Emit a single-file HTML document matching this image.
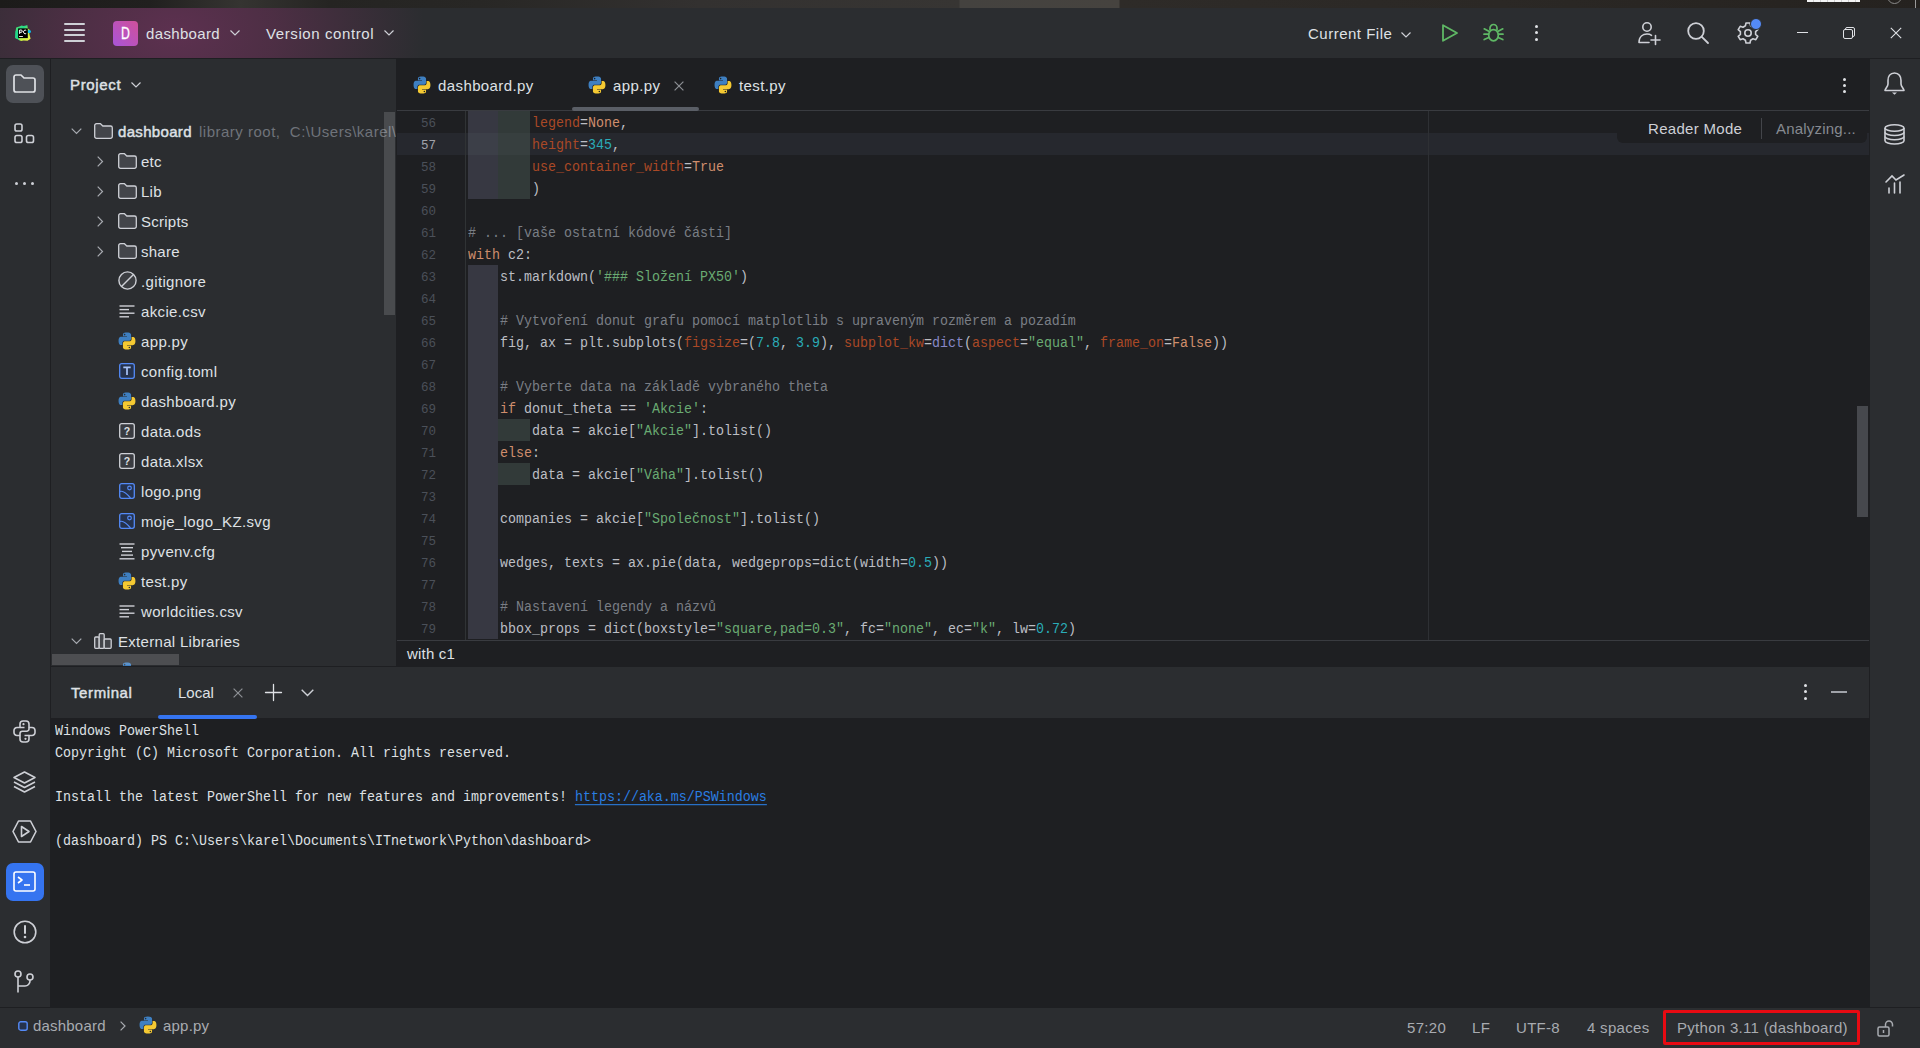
<!DOCTYPE html>
<html><head><meta charset="utf-8">
<style>
*{box-sizing:border-box;margin:0;padding:0}
html,body{width:1920px;height:1048px;overflow:hidden;background:#2b2d30;font-family:"Liberation Sans",sans-serif;color:#dfe1e5}
.a{position:absolute}
.t{position:absolute;white-space:pre;font-size:15px;line-height:18px;letter-spacing:0.25px}
.m{font-family:"Liberation Mono",monospace;font-size:13.33px;white-space:pre;transform:scaleY(1.06);transform-origin:0 14.6px}
svg{position:absolute;overflow:visible}
/* code colors */
.k{color:#cf8e6d}.p{color:#aa4926}.n{color:#2aacb8}.s{color:#6aab73}.c{color:#7a7e85}.b{color:#8888c6}
</style></head><body>

<!-- top wallpaper strip -->
<div class="a" style="left:0;top:0;width:1920px;height:8px;background:linear-gradient(90deg,#1c1b1a 0px,#21201f 150px,#353431 240px,#252422 330px,#282725 480px,#333130 700px,#373533 959px,#44423f 960px,#46433f 1119px,#2e2b28 1120px,#2b2825 1500px,#25221f 1920px)"></div>


<div class="a" style="left:0;top:0;width:1920px;height:8px;overflow:hidden">
 <div class="a" style="left:1807px;top:0;width:53px;height:1.5px;background:repeating-linear-gradient(90deg,#f4f4f4 0 6px,#cfcfcf 6px 7px)"></div>
 <div class="a" style="left:1887px;top:-11px;width:15px;height:15px;border-radius:8px;border:1.2px solid #8a8a8a"></div>
 <div class="a" style="left:1915px;top:0;width:1px;height:8px;background:#9a9a9a"></div>
</div>
<!-- title bar -->
<div class="a" style="left:0;top:8px;width:1920px;height:50px;background:#2b2d30"></div>
<div class="a" style="left:0;top:8px;width:520px;height:50px;background:radial-gradient(ellipse 250px 170px at 175px 25px,rgba(112,50,92,0.72) 0%,rgba(105,48,85,0.55) 40%,rgba(43,45,48,0) 100%)"></div>
<div class="a" style="left:0;top:58px;width:1920px;height:1px;background:#1e1f22"></div>


<!-- left strip -->
<div class="a" style="left:0;top:59px;width:50px;height:948px;background:#2b2d30"></div>
<div class="a" style="left:50px;top:59px;width:1px;height:948px;background:#1e1f22"></div>
<!-- project panel -->
<div class="a" style="left:51px;top:59px;width:345px;height:607px;background:#2b2d30"></div>
<div class="a" style="left:396px;top:59px;width:1px;height:608px;background:#1e1f22"></div>
<div class="a" style="left:51px;top:666px;width:345px;height:1px;background:#1e1f22"></div>
<!-- editor -->
<div class="a" style="left:397px;top:59px;width:1472px;height:608px;background:#1e1f22"></div>
<div class="a" style="left:397px;top:110px;width:1472px;height:1px;background:#393b40"></div>
<div class="a" style="left:397px;top:640px;width:1472px;height:1px;background:#393b40"></div>
<!-- right strip -->
<div class="a" style="left:1869px;top:59px;width:1px;height:948px;background:#1e1f22"></div>
<div class="a" style="left:1870px;top:59px;width:50px;height:948px;background:#2b2d30"></div>
<!-- terminal -->
<div class="a" style="left:51px;top:667px;width:1818px;height:51px;background:#2b2d30"></div>
<div class="a" style="left:51px;top:718px;width:1818px;height:289px;background:#1e1f22"></div>
<!-- status bar -->
<div class="a" style="left:0;top:1007px;width:1920px;height:1px;background:#1e1f22"></div>
<div class="a" style="left:0;top:1008px;width:1920px;height:40px;background:#2b2d30"></div>

<!-- title bar content -->
<svg style="left:15px;top:25px" width="16" height="16" viewBox="0 0 16 16">
 <defs><linearGradient id="pcg" x1="0" y1="0" x2="1" y2="1"><stop offset="0" stop-color="#5fe06a"/><stop offset="0.35" stop-color="#21d789"/><stop offset="0.6" stop-color="#b8f040"/><stop offset="1" stop-color="#fcf84a"/></linearGradient></defs>
 <path d="M1.2 2.5 L5 1.2 L6.5 0.6 L8.5 1 L11 0.5 L12.3 0.1 L12.8 3.5 L15 5 L15 7.5 L14.2 8.5 L15.6 13.8 L12.5 15.8 L8.5 15.6 L6 15.9 L2.5 14 L0.2 13 L0.6 6 Z" fill="url(#pcg)"/>
 <path d="M0.2 13 L0.6 6 L3 6 L3 12 L5 15.9 L2.5 14Z" fill="#21d789"/>
 <circle cx="14.3" cy="6.6" r="1.7" fill="#07c3f2"/>
 <rect x="3.1" y="3.4" width="9.7" height="9.7" fill="#000"/>
 <path d="M4.6 8.9 V5 H6.1 A1.15 1.15 0 0 1 6.1 7.3 H4.6" fill="none" stroke="#fff" stroke-width="1"/>
 <path d="M11.2 5.4 A1.7 1.9 0 1 0 11.2 8.5" fill="none" stroke="#fff" stroke-width="1"/>
 <rect x="4.1" y="11.1" width="3.8" height="0.9" fill="#fff"/>
</svg>
<div class="a" style="left:64px;top:23.3px;width:21px;height:1.7px;background:#ced0d6;border-radius:1px"></div>
<div class="a" style="left:64px;top:29.3px;width:21px;height:1.7px;background:#ced0d6;border-radius:1px"></div>
<div class="a" style="left:64px;top:34.3px;width:21px;height:1.7px;background:#ced0d6;border-radius:1px"></div>
<div class="a" style="left:64px;top:40.3px;width:21px;height:1.7px;background:#ced0d6;border-radius:1px"></div>
<div class="a" style="left:113px;top:21px;width:25px;height:25px;border-radius:4px;background:linear-gradient(45deg,#a855d8,#d0509a)"></div>
<div class="t" style="left:113px;top:25px;width:25px;text-align:center;color:#fff;font-size:17px;letter-spacing:0;transform:scaleX(0.72);-webkit-text-stroke:0.3px #fff">D</div>
<div class="t" style="left:146px;top:25px;color:#dfe1e5;letter-spacing:0.35px">dashboard</div>
<svg style="left:230px;top:30px" width="10" height="6" viewBox="0 0 10 6"><path d="M0.5 0.5 L5 5 L9.5 0.5" fill="none" stroke="#ced0d6" stroke-width="1.2"/></svg>
<div class="t" style="left:266px;top:25px;color:#dfe1e5;letter-spacing:0.6px">Version control</div>
<svg style="left:384px;top:30px" width="10" height="6" viewBox="0 0 10 6"><path d="M0.5 0.5 L5 5 L9.5 0.5" fill="none" stroke="#ced0d6" stroke-width="1.2"/></svg>

<div class="t" style="left:1308px;top:25px;color:#dfe1e5;letter-spacing:0.5px">Current File</div>
<svg style="left:1401px;top:32px" width="10" height="6" viewBox="0 0 10 6"><path d="M0.5 0.5 L5 5 L9.5 0.5" fill="none" stroke="#ced0d6" stroke-width="1.2"/></svg>
<svg style="left:1442px;top:24px" width="16" height="18" viewBox="0 0 16 18"><path d="M1 1.2 L15 9 L1 16.8 Z" fill="none" stroke="#5fb865" stroke-width="1.8" stroke-linejoin="round"/></svg>
<svg style="left:1483px;top:23px" width="20" height="19" viewBox="0 0 20 19">
 <g fill="none" stroke="#5fb865" stroke-width="1.7" stroke-linecap="round">
 <path d="M7 6.8 L7 5 A3.5 3.5 0 0 1 14 5 L14 6.8"/>
 <ellipse cx="10.5" cy="12.2" rx="4.8" ry="5.6"/>
 <path d="M1 11.2 L5.5 11.2 M15.5 11.2 L20 11.2 M1.2 5.8 L5.8 8.3 M19.8 5.8 L15.2 8.3 M1.2 16.6 L5.8 14.5 M19.8 16.6 L15.2 14.5"/>
 </g></svg>
<div class="a" style="left:1535px;top:25px;width:3px;height:3px;border-radius:2px;background:#dfe1e5"></div>
<div class="a" style="left:1535px;top:31px;width:3px;height:3px;border-radius:2px;background:#dfe1e5"></div>
<div class="a" style="left:1535px;top:38px;width:3px;height:3px;border-radius:2px;background:#dfe1e5"></div>

<svg style="left:1638px;top:21px" width="23" height="24" viewBox="0 0 23 24">
 <g fill="none" stroke="#ced0d6" stroke-width="1.6" stroke-linecap="round">
 <circle cx="9" cy="6" r="4.2"/>
 <path d="M1 21.5 C1 15.5 5 13 9 13 C11 13 12.5 13.5 13.5 14.3 M1 21.5 L11 21.5"/>
 <path d="M17.5 14.5 L17.5 23.5 M13 19 L22 19"/>
 </g></svg>
<svg style="left:1687px;top:22px" width="22" height="22" viewBox="0 0 22 22">
 <g fill="none" stroke="#ced0d6" stroke-width="1.8" stroke-linecap="round"><circle cx="9" cy="9" r="7.8"/><path d="M14.8 14.8 L21 21"/></g></svg>
<svg style="left:1737px;top:22px" width="22" height="22" viewBox="0 0 22 22">
 <g fill="none" stroke="#ced0d6" stroke-width="1.6" stroke-linejoin="round">
 <path d="M9 1 L13 1 L13.6 3.8 L16 5.2 L18.8 4.3 L20.8 7.7 L18.6 9.6 L18.6 12.4 L20.8 14.3 L18.8 17.7 L16 16.8 L13.6 18.2 L13 21 L9 21 L8.4 18.2 L6 16.8 L3.2 17.7 L1.2 14.3 L3.4 12.4 L3.4 9.6 L1.2 7.7 L3.2 4.3 L6 5.2 L8.4 3.8 Z"/>
 <circle cx="11" cy="11" r="3.2"/></g></svg>
<div class="a" style="left:1750px;top:18px;width:12px;height:12px;border-radius:6px;background:#548af7;border:1.5px solid #2b2d30"></div>
<div class="a" style="left:1797px;top:32px;width:11px;height:1.2px;background:#dfe1e5"></div>
<svg style="left:1843px;top:27px" width="12" height="12" viewBox="0 0 12 12"><g fill="none" stroke="#dfe1e5" stroke-width="1"><rect x="0.5" y="2.5" width="9" height="9" rx="1.5"/><path d="M2.5 2.5 L2.5 2 A1.5 1.5 0 0 1 4 0.5 L10 0.5 A1.5 1.5 0 0 1 11.5 2 L11.5 8 A1.5 1.5 0 0 1 10 9.5 L9.5 9.5"/></g></svg>
<svg style="left:1890px;top:27px" width="12" height="12" viewBox="0 0 12 12"><path d="M0.8 0.8 L11.2 11.2 M11.2 0.8 L0.8 11.2" stroke="#dfe1e5" stroke-width="1.1"/></svg>

<!-- left strip icons -->
<div class="a" style="left:6px;top:65px;width:38px;height:38px;border-radius:7px;background:#4e5157"></div>
<svg style="left:13px;top:74px" width="23" height="19" viewBox="0 0 23 19"><path d="M1 3 A2 2 0 0 1 3 1 L8 1 L11 4 L20 4 A2 2 0 0 1 22 6 L22 16 A2 2 0 0 1 20 18 L3 18 A2 2 0 0 1 1 16 Z" fill="none" stroke="#dfe1e5" stroke-width="1.7" stroke-linejoin="round"/></svg>
<svg style="left:14px;top:123px" width="21" height="21" viewBox="0 0 21 21"><g fill="none" stroke="#ced0d6" stroke-width="1.6"><rect x="1" y="1" width="7" height="7" rx="1.8"/><rect x="1" y="12.5" width="7" height="7" rx="1.8"/><rect x="12.5" y="12.5" width="7" height="7" rx="1.8"/></g></svg>
<div class="a" style="left:15px;top:182px;width:3.4px;height:3.4px;border-radius:2px;background:#ced0d6"></div>
<div class="a" style="left:23px;top:182px;width:3.4px;height:3.4px;border-radius:2px;background:#ced0d6"></div>
<div class="a" style="left:31px;top:182px;width:3.4px;height:3.4px;border-radius:2px;background:#ced0d6"></div>

<svg style="left:13px;top:720px" width="23" height="23" viewBox="0 0 23 23"><g fill="none" stroke="#ced0d6" stroke-width="1.6" stroke-linejoin="round">
<path d="M7 4 a3 3 0 0 1 3 -3 h3 a3 3 0 0 1 3 3 v3.5 h3 a3 3 0 0 1 3 3 v2 a3 3 0 0 1 -3 3 h-3 v3.5 a3 3 0 0 1 -3 3 h-3 a3 3 0 0 1 -3 -3 v-3.5 h-3 a3 3 0 0 1 -3 -3 v-2 a3 3 0 0 1 3 -3 h3 z"/>
<path d="M7 15.5 v-2 a2.3 2.3 0 0 1 2.3 -2.3 h4.4 a2.3 2.3 0 0 0 2.3 -2.3 v-1.4"/>
<path d="M7 7.5 h4.5 M16 15.5 h-4.5"/>
</g><circle cx="10.5" cy="4.2" r="1.1" fill="#ced0d6"/><circle cx="12.5" cy="18.8" r="1.1" fill="#ced0d6"/></svg>
<svg style="left:13px;top:771px" width="23" height="22" viewBox="0 0 23 22"><g fill="none" stroke="#ced0d6" stroke-width="1.6" stroke-linejoin="round"><path d="M11.5 1 L22 6.5 L11.5 12 L1 6.5 Z"/><path d="M1 11 L11.5 16.5 L22 11"/><path d="M1 15.5 L11.5 21 L22 15.5"/></g></svg>
<svg style="left:12px;top:820px" width="25" height="23" viewBox="0 0 25 23"><g fill="none" stroke="#ced0d6" stroke-width="1.6" stroke-linejoin="round"><path d="M6.5 1 L18.5 1 L24 11.5 L18.5 22 L6.5 22 L1 11.5 Z"/><path d="M9.5 6.5 L17 11.5 L9.5 16.5 Z"/></g></svg>
<div class="a" style="left:6px;top:863px;width:38px;height:38px;border-radius:7px;background:#3574f0"></div>
<svg style="left:13px;top:871px" width="23" height="21" viewBox="0 0 23 21"><g fill="none" stroke="#ffffff" stroke-width="1.6" stroke-linejoin="round"><rect x="1" y="1" width="21" height="19" rx="2"/><path d="M5 6 L9 9 L5 12"/><path d="M11 14 L17 14"/></g></svg>
<svg style="left:13px;top:920px" width="24" height="24" viewBox="0 0 24 24"><circle cx="12" cy="12" r="10.8" fill="none" stroke="#ced0d6" stroke-width="1.6"/><path d="M12 6 L12 13" stroke="#ced0d6" stroke-width="2" stroke-linecap="round"/><circle cx="12" cy="17" r="1.3" fill="#ced0d6"/></svg>
<svg style="left:14px;top:970px" width="21" height="23" viewBox="0 0 21 23"><g fill="none" stroke="#ced0d6" stroke-width="1.6"><circle cx="4" cy="4" r="3"/><circle cx="16" cy="7" r="3"/><path d="M4 7 L4 22.5 M4 16 L11 16 A5 5 0 0 0 16 11 L16 10"/></g></svg>
<!-- project panel content -->
<div class="t" style="left:70px;top:76px;letter-spacing:0.65px;-webkit-text-stroke:0.45px #dfe1e5">Project</div>
<svg style="left:131px;top:82px" width="10" height="6" viewBox="0 0 10 6"><path d="M0.5 0.5 L5 5 L9.5 0.5" fill="none" stroke="#ced0d6" stroke-width="1.2"/></svg>
<div class="a" style="left:51px;top:111px;width:345px;height:555px;overflow:hidden">
<svg style="left:20px;top:17px" width="11" height="7" viewBox="0 0 11 7"><path d="M0.7 0.7 L5.5 5.5 L10.3 0.7" fill="none" stroke="#a8abb1" stroke-width="1.2"/></svg>
<svg style="left:43px;top:12px" width="19" height="16" viewBox="0 0 19 16"><path d="M0.7 2.5 A1.8 1.8 0 0 1 2.5 0.7 L6.5 0.7 L8.8 3 L16.5 3 A1.8 1.8 0 0 1 18.3 4.8 L18.3 13.5 A1.8 1.8 0 0 1 16.5 15.3 L2.5 15.3 A1.8 1.8 0 0 1 0.7 13.5 Z" fill="#43454a" stroke="#ced0d6" stroke-width="1.3" stroke-linejoin="round"/></svg>
<div class="t" style="left:67px;top:12px;letter-spacing:0.33px;-webkit-text-stroke:0.45px #dfe1e5">dashboard</div>
<div class="t" style="left:148px;top:12px;color:#6f737a;letter-spacing:0.5px">library root,  C:\Users\karel\Documents\ITnetwork\Python\dashboard</div>
<svg style="left:46px;top:45px" width="7" height="11" viewBox="0 0 7 11"><path d="M0.7 0.7 L5.5 5.5 L0.7 10.3" fill="none" stroke="#a8abb1" stroke-width="1.2"/></svg>
<svg style="left:67px;top:42px" width="19" height="16" viewBox="0 0 19 16"><path d="M0.7 2.5 A1.8 1.8 0 0 1 2.5 0.7 L6.5 0.7 L8.8 3 L16.5 3 A1.8 1.8 0 0 1 18.3 4.8 L18.3 13.5 A1.8 1.8 0 0 1 16.5 15.3 L2.5 15.3 A1.8 1.8 0 0 1 0.7 13.5 Z" fill="#43454a" stroke="#ced0d6" stroke-width="1.3" stroke-linejoin="round"/></svg>
<div class="t" style="left:90px;top:42px;">etc</div>
<svg style="left:46px;top:75px" width="7" height="11" viewBox="0 0 7 11"><path d="M0.7 0.7 L5.5 5.5 L0.7 10.3" fill="none" stroke="#a8abb1" stroke-width="1.2"/></svg>
<svg style="left:67px;top:72px" width="19" height="16" viewBox="0 0 19 16"><path d="M0.7 2.5 A1.8 1.8 0 0 1 2.5 0.7 L6.5 0.7 L8.8 3 L16.5 3 A1.8 1.8 0 0 1 18.3 4.8 L18.3 13.5 A1.8 1.8 0 0 1 16.5 15.3 L2.5 15.3 A1.8 1.8 0 0 1 0.7 13.5 Z" fill="#43454a" stroke="#ced0d6" stroke-width="1.3" stroke-linejoin="round"/></svg>
<div class="t" style="left:90px;top:72px;">Lib</div>
<svg style="left:46px;top:105px" width="7" height="11" viewBox="0 0 7 11"><path d="M0.7 0.7 L5.5 5.5 L0.7 10.3" fill="none" stroke="#a8abb1" stroke-width="1.2"/></svg>
<svg style="left:67px;top:102px" width="19" height="16" viewBox="0 0 19 16"><path d="M0.7 2.5 A1.8 1.8 0 0 1 2.5 0.7 L6.5 0.7 L8.8 3 L16.5 3 A1.8 1.8 0 0 1 18.3 4.8 L18.3 13.5 A1.8 1.8 0 0 1 16.5 15.3 L2.5 15.3 A1.8 1.8 0 0 1 0.7 13.5 Z" fill="#43454a" stroke="#ced0d6" stroke-width="1.3" stroke-linejoin="round"/></svg>
<div class="t" style="left:90px;top:102px;">Scripts</div>
<svg style="left:46px;top:135px" width="7" height="11" viewBox="0 0 7 11"><path d="M0.7 0.7 L5.5 5.5 L0.7 10.3" fill="none" stroke="#a8abb1" stroke-width="1.2"/></svg>
<svg style="left:67px;top:132px" width="19" height="16" viewBox="0 0 19 16"><path d="M0.7 2.5 A1.8 1.8 0 0 1 2.5 0.7 L6.5 0.7 L8.8 3 L16.5 3 A1.8 1.8 0 0 1 18.3 4.8 L18.3 13.5 A1.8 1.8 0 0 1 16.5 15.3 L2.5 15.3 A1.8 1.8 0 0 1 0.7 13.5 Z" fill="#43454a" stroke="#ced0d6" stroke-width="1.3" stroke-linejoin="round"/></svg>
<div class="t" style="left:90px;top:132px;">share</div>
<svg style="left:67px;top:160px" width="19" height="19" viewBox="0 0 19 19"><circle cx="9.5" cy="9.5" r="8.6" fill="#3c3e42" stroke="#ced0d6" stroke-width="1.4"/><path d="M15.5 3.5 L3.5 15.5" stroke="#ced0d6" stroke-width="1.4"/></svg>
<div class="t" style="left:90px;top:162px;letter-spacing:0.35px">.gitignore</div>
<svg style="left:68px;top:194px" width="17" height="13" viewBox="0 0 17 13"><g stroke="#ced0d6" stroke-width="1.4"><path d="M0.5 1 H15.5"/><path d="M0.5 4.6 H10"/><path d="M0.5 8.2 H15.5"/><path d="M0.5 11.8 H10"/></g></svg>
<div class="t" style="left:90px;top:192px;letter-spacing:0.35px">akcie.csv</div>
<svg style="left:67px;top:221px" width="18" height="18" viewBox="0 0 16 16"><path fill-rule="evenodd" fill="#3e7fc1" d="M7.9 0.5 C4.2 0.5 4.4 2.1 4.4 2.1 L4.4 3.8 L8 3.8 L8 4.3 L2.9 4.3 C2.9 4.3 0.5 4 0.5 7.9 C0.5 11.7 2.6 11.6 2.6 11.6 L3.9 11.6 L3.9 9.8 C3.9 9.8 3.8 7.7 6 7.7 L9.6 7.7 C9.6 7.7 11.6 7.7 11.6 5.7 L11.6 2.5 C11.6 2.5 11.9 0.5 7.9 0.5 Z M5.9 1.6 A0.7 0.7 0 1 1 5.9 3 A0.7 0.7 0 1 1 5.9 1.6 Z"/><path fill-rule="evenodd" fill="#f5c932" d="M8.1 15.5 C11.8 15.5 11.6 13.9 11.6 13.9 L11.6 12.2 L8 12.2 L8 11.7 L13.1 11.7 C13.1 11.7 15.5 12 15.5 8.1 C15.5 4.3 13.4 4.4 13.4 4.4 L12.1 4.4 L12.1 6.2 C12.1 6.2 12.2 8.3 10 8.3 L6.4 8.3 C6.4 8.3 4.4 8.3 4.4 10.3 L4.4 13.5 C4.4 13.5 4.1 15.5 8.1 15.5 Z M10.1 14.4 A0.7 0.7 0 1 1 10.1 13 A0.7 0.7 0 1 1 10.1 14.4 Z"/></svg>
<div class="t" style="left:90px;top:222px;letter-spacing:0.35px">app.py</div>
<svg style="left:68px;top:252px" width="16" height="16" viewBox="0 0 16 16"><rect x="0.7" y="0.7" width="14.6" height="14.6" rx="2" fill="#25324d" stroke="#548af7" stroke-width="1.3"/><path d="M4.3 4.3 H11.7 M8 4.3 V12" stroke="#a8c3f7" stroke-width="1.7"/></svg>
<div class="t" style="left:90px;top:252px;letter-spacing:0.35px">config.toml</div>
<svg style="left:67px;top:281px" width="18" height="18" viewBox="0 0 16 16"><path fill-rule="evenodd" fill="#3e7fc1" d="M7.9 0.5 C4.2 0.5 4.4 2.1 4.4 2.1 L4.4 3.8 L8 3.8 L8 4.3 L2.9 4.3 C2.9 4.3 0.5 4 0.5 7.9 C0.5 11.7 2.6 11.6 2.6 11.6 L3.9 11.6 L3.9 9.8 C3.9 9.8 3.8 7.7 6 7.7 L9.6 7.7 C9.6 7.7 11.6 7.7 11.6 5.7 L11.6 2.5 C11.6 2.5 11.9 0.5 7.9 0.5 Z M5.9 1.6 A0.7 0.7 0 1 1 5.9 3 A0.7 0.7 0 1 1 5.9 1.6 Z"/><path fill-rule="evenodd" fill="#f5c932" d="M8.1 15.5 C11.8 15.5 11.6 13.9 11.6 13.9 L11.6 12.2 L8 12.2 L8 11.7 L13.1 11.7 C13.1 11.7 15.5 12 15.5 8.1 C15.5 4.3 13.4 4.4 13.4 4.4 L12.1 4.4 L12.1 6.2 C12.1 6.2 12.2 8.3 10 8.3 L6.4 8.3 C6.4 8.3 4.4 8.3 4.4 10.3 L4.4 13.5 C4.4 13.5 4.1 15.5 8.1 15.5 Z M10.1 14.4 A0.7 0.7 0 1 1 10.1 13 A0.7 0.7 0 1 1 10.1 14.4 Z"/></svg>
<div class="t" style="left:90px;top:282px;letter-spacing:0.35px">dashboard.py</div>
<svg style="left:68px;top:312px" width="16" height="16" viewBox="0 0 16 16"><rect x="0.7" y="0.7" width="14.6" height="14.6" rx="2" fill="#393b40" stroke="#ced0d6" stroke-width="1.3"/><text x="8" y="12" font-size="10.5" font-weight="bold" text-anchor="middle" fill="#dfe1e5" font-family="Liberation Sans">?</text></svg>
<div class="t" style="left:90px;top:312px;letter-spacing:0.35px">data.ods</div>
<svg style="left:68px;top:342px" width="16" height="16" viewBox="0 0 16 16"><rect x="0.7" y="0.7" width="14.6" height="14.6" rx="2" fill="#393b40" stroke="#ced0d6" stroke-width="1.3"/><text x="8" y="12" font-size="10.5" font-weight="bold" text-anchor="middle" fill="#dfe1e5" font-family="Liberation Sans">?</text></svg>
<div class="t" style="left:90px;top:342px;letter-spacing:0.35px">data.xlsx</div>
<svg style="left:68px;top:372px" width="16" height="16" viewBox="0 0 16 16"><rect x="0.7" y="0.7" width="14.6" height="14.6" rx="2" fill="#25324d" stroke="#548af7" stroke-width="1.3"/><circle cx="10.5" cy="5" r="1.8" fill="none" stroke="#548af7" stroke-width="1.2"/><path d="M0.8 8.5 Q5 7 11.5 15" fill="none" stroke="#548af7" stroke-width="1.2"/></svg>
<div class="t" style="left:90px;top:372px;letter-spacing:0.35px">logo.png</div>
<svg style="left:68px;top:402px" width="16" height="16" viewBox="0 0 16 16"><rect x="0.7" y="0.7" width="14.6" height="14.6" rx="2" fill="#25324d" stroke="#548af7" stroke-width="1.3"/><circle cx="10.5" cy="5" r="1.8" fill="none" stroke="#548af7" stroke-width="1.2"/><path d="M0.8 8.5 Q5 7 11.5 15" fill="none" stroke="#548af7" stroke-width="1.2"/></svg>
<div class="t" style="left:90px;top:402px;letter-spacing:0.35px">moje_logo_KZ.svg</div>
<svg style="left:68px;top:432px" width="16" height="17" viewBox="0 0 16 17"><g stroke="#ced0d6" stroke-width="1.4"><path d="M0.5 1 H15.5"/><path d="M2 4.7 H14"/><path d="M3 8.4 H13"/><path d="M2 12.1 H14"/><path d="M0.5 15.8 H15.5"/></g></svg>
<div class="t" style="left:90px;top:432px;letter-spacing:0.35px">pyvenv.cfg</div>
<svg style="left:67px;top:461px" width="18" height="18" viewBox="0 0 16 16"><path fill-rule="evenodd" fill="#3e7fc1" d="M7.9 0.5 C4.2 0.5 4.4 2.1 4.4 2.1 L4.4 3.8 L8 3.8 L8 4.3 L2.9 4.3 C2.9 4.3 0.5 4 0.5 7.9 C0.5 11.7 2.6 11.6 2.6 11.6 L3.9 11.6 L3.9 9.8 C3.9 9.8 3.8 7.7 6 7.7 L9.6 7.7 C9.6 7.7 11.6 7.7 11.6 5.7 L11.6 2.5 C11.6 2.5 11.9 0.5 7.9 0.5 Z M5.9 1.6 A0.7 0.7 0 1 1 5.9 3 A0.7 0.7 0 1 1 5.9 1.6 Z"/><path fill-rule="evenodd" fill="#f5c932" d="M8.1 15.5 C11.8 15.5 11.6 13.9 11.6 13.9 L11.6 12.2 L8 12.2 L8 11.7 L13.1 11.7 C13.1 11.7 15.5 12 15.5 8.1 C15.5 4.3 13.4 4.4 13.4 4.4 L12.1 4.4 L12.1 6.2 C12.1 6.2 12.2 8.3 10 8.3 L6.4 8.3 C6.4 8.3 4.4 8.3 4.4 10.3 L4.4 13.5 C4.4 13.5 4.1 15.5 8.1 15.5 Z M10.1 14.4 A0.7 0.7 0 1 1 10.1 13 A0.7 0.7 0 1 1 10.1 14.4 Z"/></svg>
<div class="t" style="left:90px;top:462px;letter-spacing:0.35px">test.py</div>
<svg style="left:68px;top:494px" width="17" height="13" viewBox="0 0 17 13"><g stroke="#ced0d6" stroke-width="1.4"><path d="M0.5 1 H15.5"/><path d="M0.5 4.6 H10"/><path d="M0.5 8.2 H15.5"/><path d="M0.5 11.8 H10"/></g></svg>
<div class="t" style="left:90px;top:492px;letter-spacing:0.35px">worldcities.csv</div>
<svg style="left:20px;top:527px" width="11" height="7" viewBox="0 0 11 7"><path d="M0.7 0.7 L5.5 5.5 L10.3 0.7" fill="none" stroke="#a8abb1" stroke-width="1.2"/></svg>
<svg style="left:43px;top:522px" width="18" height="16" viewBox="0 0 18 16"><g fill="#43454a" stroke="#ced0d6" stroke-width="1.3" stroke-linejoin="round"><rect x="0.7" y="4" width="4.5" height="11.3" rx="1"/><rect x="5.2" y="0.7" width="5" height="14.6" rx="1"/><rect x="10.2" y="6" width="7" height="9.3" rx="1"/></g></svg>
<div class="t" style="left:67px;top:522px;letter-spacing:0.3px">External Libraries</div>
<svg style="left:46px;top:555px" width="7" height="11" viewBox="0 0 7 11"><path d="M0.7 0.7 L5.5 5.5 L0.7 10.3" fill="none" stroke="#a8abb1" stroke-width="1.2"/></svg>
<svg style="left:67px;top:551px" width="18" height="18" viewBox="0 0 16 16"><path fill-rule="evenodd" fill="#3e7fc1" d="M7.9 0.5 C4.2 0.5 4.4 2.1 4.4 2.1 L4.4 3.8 L8 3.8 L8 4.3 L2.9 4.3 C2.9 4.3 0.5 4 0.5 7.9 C0.5 11.7 2.6 11.6 2.6 11.6 L3.9 11.6 L3.9 9.8 C3.9 9.8 3.8 7.7 6 7.7 L9.6 7.7 C9.6 7.7 11.6 7.7 11.6 5.7 L11.6 2.5 C11.6 2.5 11.9 0.5 7.9 0.5 Z M5.9 1.6 A0.7 0.7 0 1 1 5.9 3 A0.7 0.7 0 1 1 5.9 1.6 Z"/><path fill-rule="evenodd" fill="#f5c932" d="M8.1 15.5 C11.8 15.5 11.6 13.9 11.6 13.9 L11.6 12.2 L8 12.2 L8 11.7 L13.1 11.7 C13.1 11.7 15.5 12 15.5 8.1 C15.5 4.3 13.4 4.4 13.4 4.4 L12.1 4.4 L12.1 6.2 C12.1 6.2 12.2 8.3 10 8.3 L6.4 8.3 C6.4 8.3 4.4 8.3 4.4 10.3 L4.4 13.5 C4.4 13.5 4.1 15.5 8.1 15.5 Z M10.1 14.4 A0.7 0.7 0 1 1 10.1 13 A0.7 0.7 0 1 1 10.1 14.4 Z"/></svg>
</div>
<div class="a" style="left:384px;top:112px;width:11px;height:203px;background:rgba(255,255,255,0.145)"></div>
<div class="a" style="left:52px;top:654px;width:127px;height:11px;background:rgba(255,255,255,0.16)"></div>
<!-- editor tabs -->
<svg style="left:413px;top:76px" width="18" height="18" viewBox="0 0 16 16"><path fill-rule="evenodd" fill="#3e7fc1" d="M7.9 0.5 C4.2 0.5 4.4 2.1 4.4 2.1 L4.4 3.8 L8 3.8 L8 4.3 L2.9 4.3 C2.9 4.3 0.5 4 0.5 7.9 C0.5 11.7 2.6 11.6 2.6 11.6 L3.9 11.6 L3.9 9.8 C3.9 9.8 3.8 7.7 6 7.7 L9.6 7.7 C9.6 7.7 11.6 7.7 11.6 5.7 L11.6 2.5 C11.6 2.5 11.9 0.5 7.9 0.5 Z M5.9 1.6 A0.7 0.7 0 1 1 5.9 3 A0.7 0.7 0 1 1 5.9 1.6 Z"/><path fill-rule="evenodd" fill="#f5c932" d="M8.1 15.5 C11.8 15.5 11.6 13.9 11.6 13.9 L11.6 12.2 L8 12.2 L8 11.7 L13.1 11.7 C13.1 11.7 15.5 12 15.5 8.1 C15.5 4.3 13.4 4.4 13.4 4.4 L12.1 4.4 L12.1 6.2 C12.1 6.2 12.2 8.3 10 8.3 L6.4 8.3 C6.4 8.3 4.4 8.3 4.4 10.3 L4.4 13.5 C4.4 13.5 4.1 15.5 8.1 15.5 Z M10.1 14.4 A0.7 0.7 0 1 1 10.1 13 A0.7 0.7 0 1 1 10.1 14.4 Z"/></svg>
<div class="t" style="left:438px;top:77px;letter-spacing:0.4px">dashboard.py</div>
<svg style="left:588px;top:76px" width="18" height="18" viewBox="0 0 16 16"><path fill-rule="evenodd" fill="#3e7fc1" d="M7.9 0.5 C4.2 0.5 4.4 2.1 4.4 2.1 L4.4 3.8 L8 3.8 L8 4.3 L2.9 4.3 C2.9 4.3 0.5 4 0.5 7.9 C0.5 11.7 2.6 11.6 2.6 11.6 L3.9 11.6 L3.9 9.8 C3.9 9.8 3.8 7.7 6 7.7 L9.6 7.7 C9.6 7.7 11.6 7.7 11.6 5.7 L11.6 2.5 C11.6 2.5 11.9 0.5 7.9 0.5 Z M5.9 1.6 A0.7 0.7 0 1 1 5.9 3 A0.7 0.7 0 1 1 5.9 1.6 Z"/><path fill-rule="evenodd" fill="#f5c932" d="M8.1 15.5 C11.8 15.5 11.6 13.9 11.6 13.9 L11.6 12.2 L8 12.2 L8 11.7 L13.1 11.7 C13.1 11.7 15.5 12 15.5 8.1 C15.5 4.3 13.4 4.4 13.4 4.4 L12.1 4.4 L12.1 6.2 C12.1 6.2 12.2 8.3 10 8.3 L6.4 8.3 C6.4 8.3 4.4 8.3 4.4 10.3 L4.4 13.5 C4.4 13.5 4.1 15.5 8.1 15.5 Z M10.1 14.4 A0.7 0.7 0 1 1 10.1 13 A0.7 0.7 0 1 1 10.1 14.4 Z"/></svg>
<div class="t" style="left:613px;top:77px;letter-spacing:0.4px">app.py</div>
<svg style="left:674px;top:81px" width="10" height="10" viewBox="0 0 10 10"><path d="M0.6 0.6 L9.4 9.4 M9.4 0.6 L0.6 9.4" stroke="#8c8f94" stroke-width="1.2"/></svg>
<svg style="left:714px;top:76px" width="18" height="18" viewBox="0 0 16 16"><path fill-rule="evenodd" fill="#3e7fc1" d="M7.9 0.5 C4.2 0.5 4.4 2.1 4.4 2.1 L4.4 3.8 L8 3.8 L8 4.3 L2.9 4.3 C2.9 4.3 0.5 4 0.5 7.9 C0.5 11.7 2.6 11.6 2.6 11.6 L3.9 11.6 L3.9 9.8 C3.9 9.8 3.8 7.7 6 7.7 L9.6 7.7 C9.6 7.7 11.6 7.7 11.6 5.7 L11.6 2.5 C11.6 2.5 11.9 0.5 7.9 0.5 Z M5.9 1.6 A0.7 0.7 0 1 1 5.9 3 A0.7 0.7 0 1 1 5.9 1.6 Z"/><path fill-rule="evenodd" fill="#f5c932" d="M8.1 15.5 C11.8 15.5 11.6 13.9 11.6 13.9 L11.6 12.2 L8 12.2 L8 11.7 L13.1 11.7 C13.1 11.7 15.5 12 15.5 8.1 C15.5 4.3 13.4 4.4 13.4 4.4 L12.1 4.4 L12.1 6.2 C12.1 6.2 12.2 8.3 10 8.3 L6.4 8.3 C6.4 8.3 4.4 8.3 4.4 10.3 L4.4 13.5 C4.4 13.5 4.1 15.5 8.1 15.5 Z M10.1 14.4 A0.7 0.7 0 1 1 10.1 13 A0.7 0.7 0 1 1 10.1 14.4 Z"/></svg>
<div class="t" style="left:739px;top:77px;letter-spacing:0.4px">test.py</div>
<div class="a" style="left:572px;top:107px;width:127px;height:4px;border-radius:2px;background:#5a5e66"></div>
<div class="a" style="left:1843px;top:78px;width:3px;height:3px;border-radius:2px;background:#dfe1e5"></div>
<div class="a" style="left:1843px;top:84px;width:3px;height:3px;border-radius:2px;background:#dfe1e5"></div>
<div class="a" style="left:1843px;top:90px;width:3px;height:3px;border-radius:2px;background:#dfe1e5"></div>
<div class="a" style="left:397px;top:133px;width:1472px;height:22px;background:#26282e"></div>
<div class="a" style="left:465px;top:111px;width:1px;height:529px;background:#303335"></div>
<div class="a" style="left:1428px;top:111px;width:1px;height:529px;background:#2e3034"></div>
<div class="a" style="left:468px;top:111px;width:30px;height:22px;background:#373842"></div>
<div class="a" style="left:468px;top:133px;width:30px;height:22px;background:#3c3f48"></div>
<div class="a" style="left:468px;top:155px;width:30px;height:44px;background:#373842"></div>
<div class="a" style="left:498px;top:111px;width:32px;height:22px;background:#323a39"></div>
<div class="a" style="left:498px;top:133px;width:32px;height:22px;background:#373f3f"></div>
<div class="a" style="left:498px;top:155px;width:32px;height:44px;background:#323a39"></div>
<div class="a" style="left:468px;top:265px;width:30px;height:374px;background:#373842"></div>
<div class="a" style="left:498px;top:419px;width:32px;height:22px;background:#323a39"></div>
<div class="a" style="left:498px;top:463px;width:32px;height:22px;background:#323a39"></div>
<div class="a m" style="left:404px;top:112.5px;width:32px;height:22px;line-height:22px;text-align:right;font-size:12.5px;color:#4b5059">56</div>
<div class="a m" style="left:404px;top:134.5px;width:32px;height:22px;line-height:22px;text-align:right;font-size:12.5px;color:#a1a3ab">57</div>
<div class="a m" style="left:404px;top:156.5px;width:32px;height:22px;line-height:22px;text-align:right;font-size:12.5px;color:#4b5059">58</div>
<div class="a m" style="left:404px;top:178.5px;width:32px;height:22px;line-height:22px;text-align:right;font-size:12.5px;color:#4b5059">59</div>
<div class="a m" style="left:404px;top:200.5px;width:32px;height:22px;line-height:22px;text-align:right;font-size:12.5px;color:#4b5059">60</div>
<div class="a m" style="left:404px;top:222.5px;width:32px;height:22px;line-height:22px;text-align:right;font-size:12.5px;color:#4b5059">61</div>
<div class="a m" style="left:404px;top:244.5px;width:32px;height:22px;line-height:22px;text-align:right;font-size:12.5px;color:#4b5059">62</div>
<div class="a m" style="left:404px;top:266.5px;width:32px;height:22px;line-height:22px;text-align:right;font-size:12.5px;color:#4b5059">63</div>
<div class="a m" style="left:404px;top:288.5px;width:32px;height:22px;line-height:22px;text-align:right;font-size:12.5px;color:#4b5059">64</div>
<div class="a m" style="left:404px;top:310.5px;width:32px;height:22px;line-height:22px;text-align:right;font-size:12.5px;color:#4b5059">65</div>
<div class="a m" style="left:404px;top:332.5px;width:32px;height:22px;line-height:22px;text-align:right;font-size:12.5px;color:#4b5059">66</div>
<div class="a m" style="left:404px;top:354.5px;width:32px;height:22px;line-height:22px;text-align:right;font-size:12.5px;color:#4b5059">67</div>
<div class="a m" style="left:404px;top:376.5px;width:32px;height:22px;line-height:22px;text-align:right;font-size:12.5px;color:#4b5059">68</div>
<div class="a m" style="left:404px;top:398.5px;width:32px;height:22px;line-height:22px;text-align:right;font-size:12.5px;color:#4b5059">69</div>
<div class="a m" style="left:404px;top:420.5px;width:32px;height:22px;line-height:22px;text-align:right;font-size:12.5px;color:#4b5059">70</div>
<div class="a m" style="left:404px;top:442.5px;width:32px;height:22px;line-height:22px;text-align:right;font-size:12.5px;color:#4b5059">71</div>
<div class="a m" style="left:404px;top:464.5px;width:32px;height:22px;line-height:22px;text-align:right;font-size:12.5px;color:#4b5059">72</div>
<div class="a m" style="left:404px;top:486.5px;width:32px;height:22px;line-height:22px;text-align:right;font-size:12.5px;color:#4b5059">73</div>
<div class="a m" style="left:404px;top:508.5px;width:32px;height:22px;line-height:22px;text-align:right;font-size:12.5px;color:#4b5059">74</div>
<div class="a m" style="left:404px;top:530.5px;width:32px;height:22px;line-height:22px;text-align:right;font-size:12.5px;color:#4b5059">75</div>
<div class="a m" style="left:404px;top:552.5px;width:32px;height:22px;line-height:22px;text-align:right;font-size:12.5px;color:#4b5059">76</div>
<div class="a m" style="left:404px;top:574.5px;width:32px;height:22px;line-height:22px;text-align:right;font-size:12.5px;color:#4b5059">77</div>
<div class="a m" style="left:404px;top:596.5px;width:32px;height:22px;line-height:22px;text-align:right;font-size:12.5px;color:#4b5059">78</div>
<div class="a m" style="left:404px;top:618.5px;width:32px;height:22px;line-height:22px;text-align:right;font-size:12.5px;color:#4b5059">79</div>
<div class="a m" style="left:468px;top:112.5px;height:22px;line-height:22px;color:#bcbec4">        <span class="p">legend</span>=<span class="k">None</span>,</div>
<div class="a m" style="left:468px;top:134.5px;height:22px;line-height:22px;color:#bcbec4">        <span class="p">height</span>=<span class="n">345</span>,</div>
<div class="a m" style="left:468px;top:156.5px;height:22px;line-height:22px;color:#bcbec4">        <span class="p">use_container_width</span>=<span class="k">True</span></div>
<div class="a m" style="left:468px;top:178.5px;height:22px;line-height:22px;color:#bcbec4">        )</div>
<div class="a m" style="left:468px;top:200.5px;height:22px;line-height:22px;color:#bcbec4"></div>
<div class="a m" style="left:468px;top:222.5px;height:22px;line-height:22px;color:#bcbec4"><span class="c"># ... [vaše ostatní kódové části]</span></div>
<div class="a m" style="left:468px;top:244.5px;height:22px;line-height:22px;color:#bcbec4"><span class="k">with</span> c2:</div>
<div class="a m" style="left:468px;top:266.5px;height:22px;line-height:22px;color:#bcbec4">    st.markdown(<span class="s">'### Složení PX50'</span>)</div>
<div class="a m" style="left:468px;top:288.5px;height:22px;line-height:22px;color:#bcbec4"></div>
<div class="a m" style="left:468px;top:310.5px;height:22px;line-height:22px;color:#bcbec4">    <span class="c"># Vytvoření donut grafu pomocí matplotlib s upraveným rozměrem a pozadím</span></div>
<div class="a m" style="left:468px;top:332.5px;height:22px;line-height:22px;color:#bcbec4">    fig, ax = plt.subplots(<span class="p">figsize</span>=(<span class="n">7.8</span>, <span class="n">3.9</span>), <span class="p">subplot_kw</span>=<span class="b">dict</span>(<span class="p">aspect</span>=<span class="s">"equal"</span>, <span class="p">frame_on</span>=<span class="k">False</span>))</div>
<div class="a m" style="left:468px;top:354.5px;height:22px;line-height:22px;color:#bcbec4"></div>
<div class="a m" style="left:468px;top:376.5px;height:22px;line-height:22px;color:#bcbec4">    <span class="c"># Vyberte data na základě vybraného theta</span></div>
<div class="a m" style="left:468px;top:398.5px;height:22px;line-height:22px;color:#bcbec4">    <span class="k">if</span> donut_theta == <span class="s">'Akcie'</span>:</div>
<div class="a m" style="left:468px;top:420.5px;height:22px;line-height:22px;color:#bcbec4">        data = akcie[<span class="s">"Akcie"</span>].tolist()</div>
<div class="a m" style="left:468px;top:442.5px;height:22px;line-height:22px;color:#bcbec4">    <span class="k">else</span>:</div>
<div class="a m" style="left:468px;top:464.5px;height:22px;line-height:22px;color:#bcbec4">        data = akcie[<span class="s">"Váha"</span>].tolist()</div>
<div class="a m" style="left:468px;top:486.5px;height:22px;line-height:22px;color:#bcbec4"></div>
<div class="a m" style="left:468px;top:508.5px;height:22px;line-height:22px;color:#bcbec4">    companies = akcie[<span class="s">"Společnost"</span>].tolist()</div>
<div class="a m" style="left:468px;top:530.5px;height:22px;line-height:22px;color:#bcbec4"></div>
<div class="a m" style="left:468px;top:552.5px;height:22px;line-height:22px;color:#bcbec4">    wedges, texts = ax.pie(data, wedgeprops=dict(width=<span class="n">0.5</span>))</div>
<div class="a m" style="left:468px;top:574.5px;height:22px;line-height:22px;color:#bcbec4"></div>
<div class="a m" style="left:468px;top:596.5px;height:22px;line-height:22px;color:#bcbec4">    <span class="c"># Nastavení legendy a názvů</span></div>
<div class="a m" style="left:468px;top:618.5px;height:22px;line-height:22px;color:#bcbec4">    bbox_props = dict(boxstyle=<span class="s">"square,pad=0.3"</span>, fc=<span class="s">"none"</span>, ec=<span class="s">"k"</span>, lw=<span class="n">0.72</span>)</div>
<div class="a" style="left:1617px;top:113px;width:250px;height:30px;border-radius:0 0 6px 6px;background:#1e1f22"></div>
<div class="t" style="left:1648px;top:120px;color:#ced0d6;letter-spacing:0.3px">Reader Mode</div>
<div class="a" style="left:1761px;top:118px;width:1px;height:21px;background:#43454a"></div>
<div class="t" style="left:1776px;top:120px;color:#868a91;letter-spacing:0.2px">Analyzing...</div>
<div class="a" style="left:1857px;top:406px;width:11px;height:111px;background:#46484d"></div>
<div class="t" style="left:407px;top:645px;color:#dfe1e5;letter-spacing:0.2px">with c1</div>
<!-- right strip icons -->
<svg style="left:1884px;top:72px" width="21" height="23" viewBox="0 0 21 23"><g fill="none" stroke="#ced0d6" stroke-width="1.6" stroke-linejoin="round"><path d="M10.5 1 C6 1 4 4.5 4 8.5 L4 12 C4 14.5 1 17 1 18.5 L20 18.5 C20 17 17 14.5 17 12 L17 8.5 C17 4.5 15 1 10.5 1 Z"/></g><path d="M8 20.5 L13 20.5 L10.5 22.8 Z" fill="#ced0d6"/></svg>
<svg style="left:1884px;top:124px" width="21" height="21" viewBox="0 0 21 21"><g fill="none" stroke="#ced0d6" stroke-width="1.6"><ellipse cx="10.5" cy="4" rx="9.5" ry="3.2"/><path d="M1 4 L1 16.8 A9.5 3.2 0 0 0 20 16.8 L20 4"/><path d="M1 8.3 A9.5 3.2 0 0 0 20 8.3"/><path d="M1 12.5 A9.5 3.2 0 0 0 20 12.5"/></g></svg>
<svg style="left:1885px;top:174px" width="20" height="20" viewBox="0 0 20 20"><g fill="none" stroke="#ced0d6" stroke-width="1.6" stroke-linecap="round"><path d="M1 8 L7 2 L11 6 L19 1"/><path d="M4 14 L4 19 M9.5 9 L9.5 19 M15 8 L15 19"/></g></svg>
<!-- terminal -->
<div class="t" style="left:71px;top:684px;letter-spacing:0.6px;-webkit-text-stroke:0.45px #dfe1e5">Terminal</div>
<div class="t" style="left:178px;top:684px;letter-spacing:0px">Local</div>
<svg style="left:233px;top:688px" width="10" height="10" viewBox="0 0 10 10"><path d="M0.6 0.6 L9.4 9.4 M9.4 0.6 L0.6 9.4" stroke="#8c8f94" stroke-width="1.2"/></svg>
<svg style="left:265px;top:684px" width="17" height="17" viewBox="0 0 17 17"><path d="M8.5 0.5 L8.5 16.5 M0.5 8.5 L16.5 8.5" stroke="#dfe1e5" stroke-width="1.3" stroke-linecap="round"/></svg>
<svg style="left:301px;top:689px" width="13" height="8" viewBox="0 0 13 8"><path d="M0.7 0.7 L6.5 6.5 L12.3 0.7" fill="none" stroke="#ced0d6" stroke-width="1.4"/></svg>
<div class="a" style="left:158px;top:715px;width:99px;height:4px;border-radius:2px;background:#3574f0"></div>
<div class="a" style="left:1804px;top:684px;width:3px;height:3px;border-radius:2px;background:#dfe1e5"></div>
<div class="a" style="left:1804px;top:690px;width:3px;height:3px;border-radius:2px;background:#dfe1e5"></div>
<div class="a" style="left:1804px;top:697px;width:3px;height:3px;border-radius:2px;background:#dfe1e5"></div>
<div class="a" style="left:1831px;top:691px;width:16px;height:2px;background:#a0a3a9"></div>
<div class="a m" style="left:55px;top:720.5px;height:22px;line-height:22px;color:#dfe1e5">Windows PowerShell</div>
<div class="a m" style="left:55px;top:742.5px;height:22px;line-height:22px;color:#dfe1e5">Copyright (C) Microsoft Corporation. All rights reserved.</div>
<div class="a m" style="left:55px;top:786.5px;height:22px;line-height:22px;color:#dfe1e5">Install the latest PowerShell for new features and improvements! <span style="color:#2a7ee3;text-decoration:underline;text-underline-offset:3px">https://aka.ms/PSWindows</span></div>
<div class="a m" style="left:55px;top:830.5px;height:22px;line-height:22px;color:#dfe1e5">(dashboard) PS C:\Users\karel\Documents\ITnetwork\Python\dashboard&gt;</div>
<!-- status bar -->
<svg style="left:18px;top:1021px" width="10" height="10" viewBox="0 0 10 10"><rect x="0.8" y="0.8" width="8.4" height="8.4" rx="2" fill="#25324d" stroke="#548af7" stroke-width="1.4"/></svg>
<div class="t" style="left:33px;top:1017px;color:#a8abb0;letter-spacing:0.2px">dashboard</div>
<svg style="left:120px;top:1021px" width="6" height="10" viewBox="0 0 6 10"><path d="M0.6 0.6 L5 5 L0.6 9.4" fill="none" stroke="#a8abb0" stroke-width="1.2"/></svg>
<svg style="left:139px;top:1016px" width="18" height="18" viewBox="0 0 16 16"><path fill-rule="evenodd" fill="#3e7fc1" d="M7.9 0.5 C4.2 0.5 4.4 2.1 4.4 2.1 L4.4 3.8 L8 3.8 L8 4.3 L2.9 4.3 C2.9 4.3 0.5 4 0.5 7.9 C0.5 11.7 2.6 11.6 2.6 11.6 L3.9 11.6 L3.9 9.8 C3.9 9.8 3.8 7.7 6 7.7 L9.6 7.7 C9.6 7.7 11.6 7.7 11.6 5.7 L11.6 2.5 C11.6 2.5 11.9 0.5 7.9 0.5 Z M5.9 1.6 A0.7 0.7 0 1 1 5.9 3 A0.7 0.7 0 1 1 5.9 1.6 Z"/><path fill-rule="evenodd" fill="#f5c932" d="M8.1 15.5 C11.8 15.5 11.6 13.9 11.6 13.9 L11.6 12.2 L8 12.2 L8 11.7 L13.1 11.7 C13.1 11.7 15.5 12 15.5 8.1 C15.5 4.3 13.4 4.4 13.4 4.4 L12.1 4.4 L12.1 6.2 C12.1 6.2 12.2 8.3 10 8.3 L6.4 8.3 C6.4 8.3 4.4 8.3 4.4 10.3 L4.4 13.5 C4.4 13.5 4.1 15.5 8.1 15.5 Z M10.1 14.4 A0.7 0.7 0 1 1 10.1 13 A0.7 0.7 0 1 1 10.1 14.4 Z"/></svg>
<div class="t" style="left:163px;top:1017px;color:#a8abb0;letter-spacing:0.2px">app.py</div>
<div class="t" style="left:1407px;top:1019px;color:#a8abb0;letter-spacing:0.3px">57:20</div>
<div class="t" style="left:1472px;top:1019px;color:#a8abb0;letter-spacing:0.3px">LF</div>
<div class="t" style="left:1516px;top:1019px;color:#a8abb0;letter-spacing:0.3px">UTF-8</div>
<div class="t" style="left:1587px;top:1019px;color:#a8abb0;letter-spacing:0.3px">4 spaces</div>
<div class="t" style="left:1677px;top:1019px;color:#a8abb0;letter-spacing:0.3px">Python 3.11 (dashboard)</div>
<div class="a" style="left:1663px;top:1010px;width:197px;height:35px;border:3px solid #e80a12;border-radius:2px"></div>
<svg style="left:1877px;top:1020px" width="18" height="17" viewBox="0 0 18 17"><g fill="none" stroke="#a8abb0" stroke-width="1.5"><rect x="1" y="7" width="11" height="9" rx="1.5"/><path d="M8.5 7 L8.5 4.5 A3.5 3.5 0 0 1 15.5 4.5 L15.5 6.5"/><path d="M6.5 10 L6.5 13"/></g></svg>
</body></html>
